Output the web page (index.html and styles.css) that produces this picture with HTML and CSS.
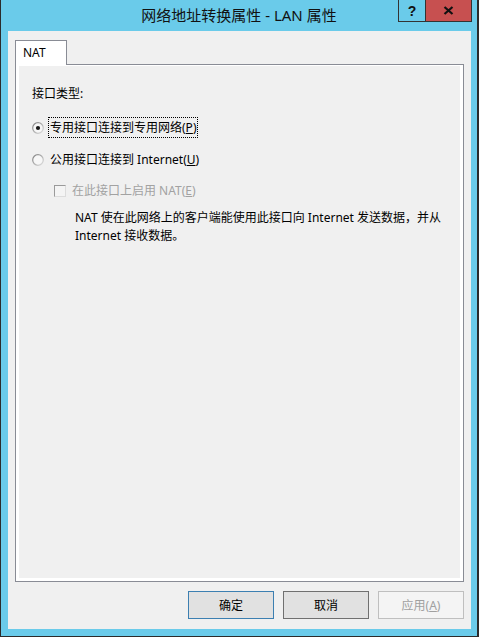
FILE: index.html
```html
<!DOCTYPE html>
<html lang="zh-CN">
<head>
<meta charset="utf-8">
<title>网络地址转换属性 - LAN 属性</title>
<link rel="stylesheet" href="styles.css">
</head>
<body>
<div class="window">
  <div class="titlebar">
    <span class="spacer"></span>
    <h1 class="title">网络地址转换属性 - LAN 属性</h1>
    <div class="caption-buttons">
      <button class="cap cap-help" type="button">?</button>
      <button class="cap cap-close" type="button" aria-label="关闭">
        <svg width="11" height="9" viewBox="0 0 11 9"><path d="M1.5 1 L9.5 8 M9.5 1 L1.5 8" stroke="#111" stroke-width="2.2" fill="none"/></svg>
      </button>
    </div>
  </div>

  <div class="client">
    <div class="tabs">
      <div class="tab active">NAT</div>
    </div>
    <div class="tab-panel">
      <div class="page">
        <div class="group-label">接口类型:</div>

        <div class="option">
          <svg class="radio" width="12" height="12" viewBox="0 0 12 12">
            <defs>
              <linearGradient id="ring1" x1="0" y1="0" x2="1" y2="1">
                <stop offset="0" stop-color="#7c7c7c"/>
                <stop offset="1" stop-color="#e2e2e2"/>
              </linearGradient>
            </defs>
            <circle cx="6" cy="6" r="5.3" fill="#f7f7f7" stroke="url(#ring1)" stroke-width="1.2"/>
            <circle cx="6" cy="6" r="2.1" fill="#161616"/>
          </svg>
          <span class="option-text focused">专用接口连接到专用网络(<u>P</u>)</span>
        </div>

        <div class="option option-second">
          <svg class="radio" width="12" height="12" viewBox="0 0 12 12">
            <defs>
              <linearGradient id="ring2" x1="0" y1="0" x2="1" y2="1">
                <stop offset="0" stop-color="#7c7c7c"/>
                <stop offset="1" stop-color="#e2e2e2"/>
              </linearGradient>
            </defs>
            <circle cx="6" cy="6" r="5.3" fill="#f7f7f7" stroke="url(#ring2)" stroke-width="1.2"/>
          </svg>
          <span class="option-text">公用接口连接到 Internet(<u>U</u>)</span>
        </div>

        <div class="option option-check disabled">
          <span class="checkbox"></span>
          <span class="option-text">在此接口上启用 NAT(<u>E</u>)</span>
        </div>

        <p class="description">NAT 使在此网络上的客户端能使用此接口向 Internet 发送数据，并从 Internet 接收数据。</p>
      </div>
    </div>

    <div class="actions">
      <button class="btn btn-default" type="button">确定</button>
      <button class="btn" type="button">取消</button>
      <button class="btn" type="button" disabled>应用(<u>A</u>)</button>
    </div>
  </div>
</div>
</body>
</html>
```

FILE: styles.css
```css
* {
  box-sizing: border-box;
}

html, body {
  margin: 0;
  padding: 0;
  background: #6acbea;
}

body {
  font-family: "Noto Sans", "Noto Sans CJK SC", sans-serif;
  font-size: 12px;
  color: #000;
}

.window {
  width: 479px;
  height: 637px;
  display: flex;
  flex-direction: column;
  background: #6acbea;
  border-left: 1px solid #2b2b2b;
  border-right: 2px solid #2b2b2b;
  border-bottom: 1px solid #2b2b2b;
}

/* caption */
.titlebar {
  height: 31px;
  flex: none;
  display: grid;
  grid-template-columns: 1fr auto 1fr;
  align-items: start;
  padding: 0 5px;
}

.title {
  margin: 0;
  font-family: "Noto Sans", "Noto Sans CJK SC", sans-serif;
  font-weight: normal;
  font-size: 15px;
  line-height: 30px;
  color: #111;
  white-space: nowrap;
}

.caption-buttons {
  justify-self: end;
  display: flex;
  height: 22px;
  border: 1px solid #333;
  border-top: none;
}

.cap {
  margin: 0;
  padding: 0;
  border: none;
  height: 21px;
  display: flex;
  align-items: center;
  justify-content: center;
  font-family: "Liberation Sans", sans-serif;
  font-weight: bold;
  font-size: 14px;
  color: #111;
}

.cap-help {
  width: 27px;
  background: #6acbea;
  border-right: 1px solid #333;
}

.cap-close {
  width: 45px;
  background: #c75050;
}

/* client area */
.client {
  flex: 1;
  margin: 0 6px 7px 7px;
  background: #f0f0f0;
  padding: 9px 7px 0 7px;
  display: flex;
  flex-direction: column;
}

.tabs {
  display: flex;
  height: 24px;
  position: relative;
  z-index: 1;
}

.tab {
  width: 52px;
  height: 25px;
  background: #fff;
  border: 1px solid #898c95;
  border-bottom: none;
  padding: 4px 0 0 7px;
  line-height: 16px;
  font-size: 12px;
}

.tab-panel {
  height: 518px;
  border: 1px solid #898c95;
  background: #fff;
  padding: 1px 3px 3px 3px;
}

.page {
  height: 100%;
  background: #f0f0f0;
  padding: 19px 0 0 13px;
}

.group-label {
  line-height: 18px;
  height: 18px;
}

.option {
  display: flex;
  align-items: center;
  height: 21px;
  margin-top: 14px;
}

.option-second {
  margin-top: 11px;
}

.option-check {
  margin-top: 10px;
  margin-left: 22px;
}

.radio {
  flex: none;
  display: block;
}

.option-text {
  margin-left: 4px;
  border: 1px solid transparent;
  padding: 0 1px;
  line-height: 19px;
  white-space: nowrap;
}

.option-text.focused {
  border: 1px dotted #000;
}

.checkbox {
  flex: none;
  width: 12px;
  height: 12px;
  background: #f4f4f4;
  border: 1px solid;
  border-color: #9a9a9a #dcdcdc #dcdcdc #9a9a9a;
}

.disabled .option-text {
  color: #a2a2a2;
}

.description {
  margin: 8px 0 0 43px;
  width: 384px;
  line-height: 18px;
}

/* dialog buttons */
.actions {
  display: flex;
  justify-content: flex-end;
  gap: 9px;
  margin-top: 9px;
}

.btn {
  width: 86px;
  height: 28px;
  margin: 0;
  padding: 0;
  background: #e1e1e1;
  border: 1px solid #707070;
  font-family: "Noto Sans", "Noto Sans CJK SC", sans-serif;
  font-size: 12px;
  color: #000;
}

.btn-default {
  border-color: #3c7fb1;
}

.btn:disabled {
  background: #f4f4f4;
  border-color: #bfbfbf;
  color: #a0a0a0;
}
```
